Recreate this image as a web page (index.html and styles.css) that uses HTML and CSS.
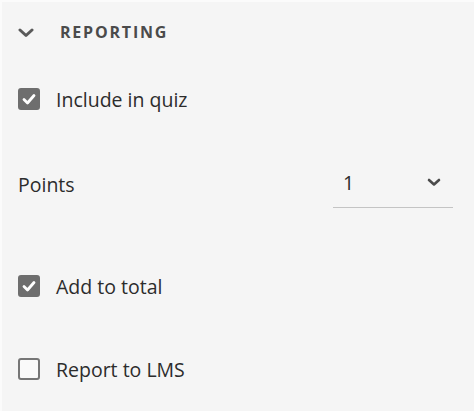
FILE: index.html
```html
<!DOCTYPE html>
<html lang="en">
<head>
    <meta charset="UTF-8">
    <title>Reporting</title>
    <link rel="stylesheet" href="styles.css">
</head>
<body>
    <div class="panel">
        <div class="section-head">
            <svg class="chevron" width="16" height="10" viewBox="0 0 16 10">
                <path d="M2 2 L8 7.5 L14 2" fill="none" stroke="#5a5a5a" stroke-width="3" stroke-linecap="round" stroke-linejoin="round"/>
            </svg>
            <span class="section-title">REPORTING</span>
        </div>

        <label class="check-row first">
            <span class="box checked">
                <svg width="14" height="12" viewBox="0 0 14 12">
                    <path d="M2 6.5 L5.5 10 L12 2.5" fill="none" stroke="#fff" stroke-width="2.8" stroke-linecap="round" stroke-linejoin="round"/>
                </svg>
            </span>
            <span class="check-label">Include in quiz</span>
        </label>

        <div class="field-row">
            <span class="field-label">Points</span>
            <div class="picker">
                <span class="picker-value">1</span>
                <svg width="14" height="9" viewBox="0 0 14 9">
                    <path d="M2 2 L7 6.5 L12 2" fill="none" stroke="#4b4b4b" stroke-width="2.6" stroke-linecap="round" stroke-linejoin="round"/>
                </svg>
            </div>
        </div>

        <label class="check-row second">
            <span class="box checked">
                <svg width="14" height="12" viewBox="0 0 14 12">
                    <path d="M2 6.5 L5.5 10 L12 2.5" fill="none" stroke="#fff" stroke-width="2.8" stroke-linecap="round" stroke-linejoin="round"/>
                </svg>
            </span>
            <span class="check-label">Add to total</span>
        </label>

        <label class="check-row third">
            <span class="box"></span>
            <span class="check-label">Report to LMS</span>
        </label>
    </div>
</body>
</html>
```

FILE: styles.css
```css
body {
    margin: 0;
    background: #f5f5f5;
    font-family: "Open Sans", Arial, sans-serif;
    color: #2c2c2c;
}

.panel {
    box-sizing: border-box;
    width: 474px;
    height: 411px;
    padding: 0 21px 0 16px;
    border-top: 2px solid #fbfbfb;
    border-left: 2px solid #fbfbfb;
    display: flex;
    flex-direction: column;
}

.section-head {
    height: 60px;
    display: flex;
    align-items: center;
    gap: 26px;
}

.chevron {
    margin-top: 1px;
}

.section-title {
    font-size: 16px;
    font-weight: 700;
    letter-spacing: 1.8px;
    color: #4b4b4b;
}

.check-row {
    display: flex;
    align-items: center;
    gap: 16px;
    height: 22px;
}

.check-row.first {
    margin-top: 26px;
}

.check-row.second {
    margin-top: 67px;
}

.check-row.third {
    margin-top: 61px;
}

.box {
    box-sizing: border-box;
    width: 22px;
    height: 22px;
    border: 2px solid #767676;
    border-radius: 3px;
    background: #fafafa;
    display: flex;
    align-items: center;
    justify-content: center;
}

.box.checked {
    background: #6e6e6e;
    border-color: #6e6e6e;
}

.check-label {
    font-size: 19.5px;
}

.field-row {
    margin-top: 50px;
    display: flex;
    justify-content: space-between;
    align-items: center;
    height: 48px;
}

.field-label {
    font-size: 19.5px;
}

.picker {
    box-sizing: border-box;
    width: 120px;
    height: 48px;
    padding: 0 12px 2px 10px;
    border-bottom: 1.5px solid #c4c4c4;
    display: flex;
    align-items: center;
    justify-content: space-between;
}

.picker-value {
    font-size: 19.5px;
}
```
